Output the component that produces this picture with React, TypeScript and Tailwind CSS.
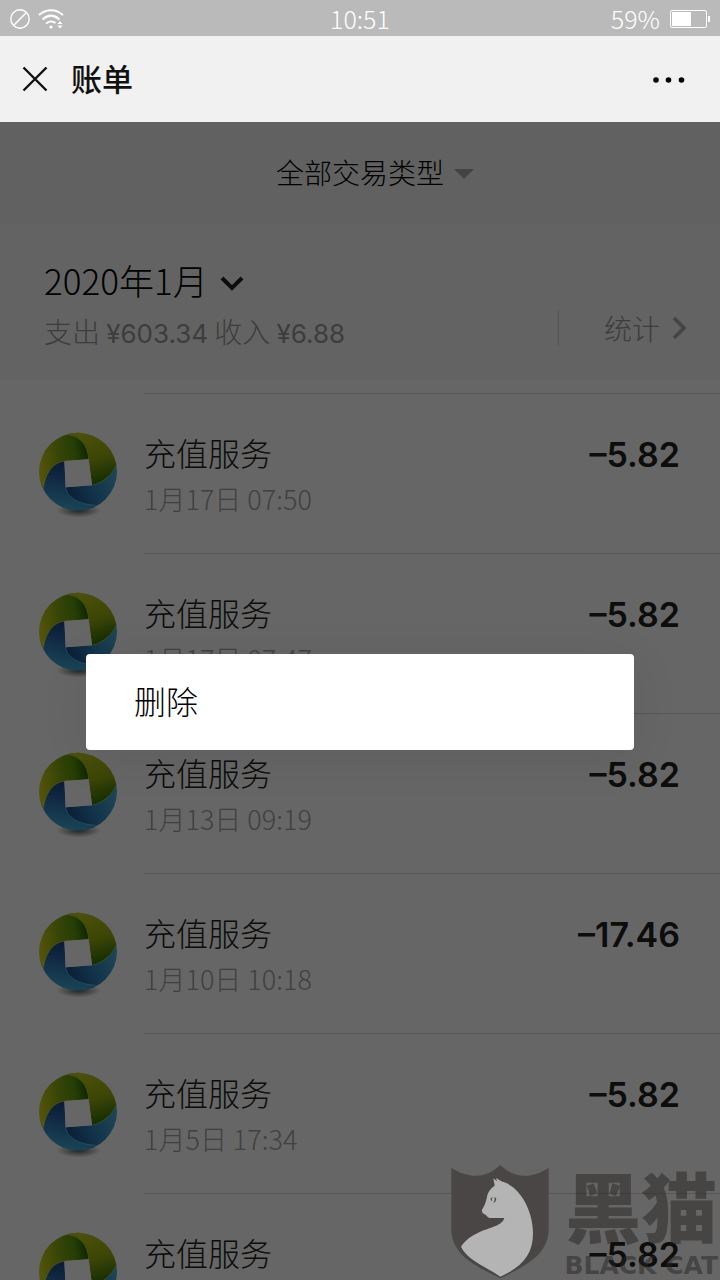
interface Bill {
  id: number
  title: string
  time?: string
  amount: string
}

const bills: Bill[] = [
  { id: 1, title: '充值服务', time: '1月17日 07:50', amount: '–5.82' },
  { id: 2, title: '充值服务', time: '1月17日 07:47', amount: '–5.82' },
  { id: 3, title: '充值服务', time: '1月13日 09:19', amount: '–5.82' },
  { id: 4, title: '充值服务', time: '1月10日 10:18', amount: '–17.46' },
  { id: 5, title: '充值服务', time: '1月5日 17:34', amount: '–5.82' },
  { id: 6, title: '充值服务', amount: '–5.82' },
]

function StatusBar() {
  return (
    <div className="grid h-9 shrink-0 grid-cols-3 items-center bg-[#bababa] px-2.5 text-[25px] font-light text-white">
      <div className="flex items-center gap-2">
        <svg viewBox="0 0 20 20" className="size-5" fill="none" stroke="currentColor" strokeWidth="1.4">
          <circle cx="10" cy="10" r="9.2" />
          <path d="M4 16 16 4" />
        </svg>
        <svg viewBox="0 0 26 20" className="h-5 w-[26px]" fill="none" stroke="currentColor" strokeWidth="2">
          <path d="M1 6C8-.5 18-.5 25 6M4.500 10.500C10 5.500 16 5.500 21.500 10.500M8 14.500c3-2.700 7-2.700 9.500-.5" />
          <circle cx="13" cy="18" r="1.600" fill="currentColor" stroke="none" />
          <path d="m19.500 15 2.500-3 2.500 3zM19.500 16.500l2.500 3 2.500-3z" fill="currentColor" stroke="none" />
        </svg>
      </div>
      <span className="text-center">10:51</span>
      <div className="flex items-center justify-end gap-2.5">
        <span>59%</span>
        <svg viewBox="0 0 40 18" className="h-[18px] w-10" fill="none" stroke="currentColor">
          <rect x="0.500" y="0.500" width="36" height="17" rx="1.500" />
          <path d="M2 2h19v14H2z" fill="currentColor" stroke="none" />
          <path d="M38 6h2v6h-2z" fill="currentColor" stroke="none" />
        </svg>
      </div>
    </div>
  )
}

function TitleBar() {
  return (
    <header className="flex h-[86px] shrink-0 items-center bg-[#f1f1f1] pr-8 pl-[22px] text-[#111]">
      <button type="button" aria-label="关闭">
        <svg viewBox="0 0 26 26" className="size-[26px]" fill="none" stroke="currentColor" strokeWidth="2.400">
          <path d="m1.500 1.500 23 23M24.500 1.500l-23 23" />
        </svg>
      </button>
      <h1 className="ml-[23px] pb-0.5 text-[31px] font-medium">账单</h1>
      <button type="button" aria-label="更多" className="ml-auto pt-0.5">
        <svg viewBox="0 0 36 8" className="h-2 w-9" fill="#000">
          <circle cx="4" cy="4" r="2.800" />
          <circle cx="16.500" cy="4" r="2.800" />
          <circle cx="29.500" cy="4" r="2.800" />
        </svg>
      </button>
    </header>
  )
}

// Gradients and clip shared by every bill icon
function LogoGradients() {
  return (
    <svg className="absolute size-0" aria-hidden="true">
      <defs>
        <clipPath id="logoRound">
          <circle cx="144" cy="137" r="117" />
        </clipPath>
        <linearGradient id="leafTop" x1="0" y1="0.6" x2="1" y2="0.4">
          <stop offset="0" stopColor="#d6d820" />
          <stop offset="0.45" stopColor="#8cac10" />
          <stop offset="0.75" stopColor="#5f9a0c" />
          <stop offset="1" stopColor="#2a5c0c" />
        </linearGradient>
        <linearGradient id="leafRight" x1="0.3" y1="0" x2="0.6" y2="1">
          <stop offset="0" stopColor="#c4cc20" />
          <stop offset="0.55" stopColor="#98ae10" />
          <stop offset="1" stopColor="#2f6c0c" />
        </linearGradient>
        <linearGradient id="waveBottom" x1="0" y1="0.7" x2="1" y2="0.2">
          <stop offset="0" stopColor="#1a4684" />
          <stop offset="0.4" stopColor="#2c7cb4" />
          <stop offset="1" stopColor="#56b4dc" />
        </linearGradient>
        <linearGradient id="waveLeft" x1="0.5" y1="0" x2="0.3" y2="1">
          <stop offset="0" stopColor="#1c3c7c" />
          <stop offset="0.4" stopColor="#2c6cac" />
          <stop offset="1" stopColor="#44bce0" />
        </linearGradient>
        <radialGradient id="logoShade">
          <stop offset="0" stopColor="#333" stopOpacity="0.8" />
          <stop offset="1" stopColor="#333" stopOpacity="0" />
        </radialGradient>
      </defs>
    </svg>
  )
}

function BillLogo() {
  return (
    <svg viewBox="24 15 240 264" className="h-[88px] w-20 shrink-0" aria-hidden="true">
      <ellipse cx="146" cy="254" rx="66" ry="20" fill="url(#logoShade)" />
      <g clipPath="url(#logoRound)">
        <path d="M270 90V260H140C125 230 110 210 107 184L186 178C225 168 250 145 270 90Z" fill="url(#waveBottom)" />
        <path d="M103 105C60 115 34 150 20 190V260H160L200 236C150 235 112 215 107 184Z" fill="url(#waveLeft)" />
        <path d="M20 210V10H150C170 40 178 65 176 100L103 105C65 112 44 145 38 210Z" fill="url(#leafTop)" />
        <path d="M112 25 140 10H270V90C255 140 225 168 186 178L176 100C172 55 150 32 112 25Z" fill="url(#leafRight)" />
        <path
          d="M38 205C42 145 65 113 103 105M112 25C150 32 172 55 176 100M264 100C252 145 225 168 186 178"
          fill="none"
          stroke="#c4dc4c"
          strokeOpacity="0.5"
          strokeWidth="2.500"
        />
        <path d="M195 238C145 235 112 215 107 184" fill="none" stroke="#6cd0ec" strokeOpacity="0.6" strokeWidth="3" />
      </g>
      <path d="m103 105 73-5 10 78-79 6z" fill="#fff" />
    </svg>
  )
}

function BillRow({ bill }: { bill: Bill }) {
  return (
    <li className="flex h-40 shrink-0 items-start pl-[38px]">
      <div className="pt-[38px]">
        <BillLogo />
      </div>
      <div className="ml-[26px] flex h-full flex-1 items-start justify-between border-t border-[#dadada] pt-[35px] pr-10">
        <div>
          <p className="text-[32px] leading-[46px] font-light text-[#222]">{bill.title}</p>
          {bill.time && <p className="text-[27px] leading-[48px] font-light text-[#a2a2a2]">{bill.time}</p>}
        </div>
        <p className="font-['Inter','Noto_Sans_CJK_SC',sans-serif] text-[34px] leading-[52px] font-semibold text-[#222]">
          {bill.amount}
        </p>
      </div>
    </li>
  )
}

function Summary() {
  return (
    <section className="flex h-[156px] shrink-0 flex-col bg-[#f7f7f7] pt-8 pr-8 pl-11">
      <button type="button" className="flex items-center gap-3 self-start text-[35px] leading-[48px] font-light text-black">
        2020年1月
        <svg viewBox="0 0 24 16" className="mt-2 h-4 w-6" fill="none" stroke="#222" strokeWidth="4">
          <path d="m2 2 10 10L22 2" />
        </svg>
      </button>
      <div className="flex items-start justify-between text-[28px] leading-[48px] font-light text-[#999]">
        <p className="pt-[3px]">
          支出 <span className="font-['Inter','Noto_Sans_CJK_SC',sans-serif] text-[26px] font-normal">¥603.34</span> 收入{' '}
          <span className="font-['Inter','Noto_Sans_CJK_SC',sans-serif] text-[26px] font-normal">¥6.88</span>
        </p>
        <a href="#stats" className="flex items-center">
          <span className="mr-[45px] h-9 w-px bg-[#d0d0d0]" />
          统计
          <svg viewBox="0 0 16 24" className="ml-3 h-6 w-4" fill="none" stroke="#aaa" strokeWidth="3.500">
            <path d="m2 2 10 10L2 22" />
          </svg>
        </a>
      </div>
    </section>
  )
}

function Watermark() {
  return (
    <div className="pointer-events-none absolute right-0 bottom-0 flex items-start gap-[15px] pr-0.5 text-[#282222]/50">
      <svg viewBox="33 45 292 345" className="h-[115px] w-[98px]" aria-hidden="true">
        <path d="M33 54C85 85 135 88 180 45 225 88 275 85 325 54V235C325 315 260 345 180 385 100 345 33 315 33 235Z" fill="#4a4646" />
        <path
          d="M159 85 170 94 167 84 183 94C238 108 278 180 278 250 278 315 245 350 180 380 140 352 80 330 62 290 90 248 140 240 172 225 184 219 190 212 192 204H148C136 200 140 194 132 193 126 190 124 184 125 179 132 168 137 158 141 135 146 120 155 112 163 107Z"
          fill="#b4b4b4"
        />
        <path d="m151 145 7-4-4 6 2 7-5-4zM163 140l5 6-3 9-6 4 4-9z" fill="#4a4646" />
      </svg>
      <div className="flex flex-col items-center gap-3 pt-px">
        <span className="text-[76px] leading-[76px] font-black">黑猫</span>
        <span className="font-['DejaVu_Sans',sans-serif] text-[25px] leading-6 font-bold">BLACK CAT</span>
      </div>
    </div>
  )
}

function App() {
  return (
    <div className="relative flex h-screen flex-col overflow-hidden font-['Noto_Sans_CJK_SC',sans-serif]">
      <StatusBar />
      <TitleBar />
      <main className="relative flex min-h-0 flex-1 flex-col overflow-hidden bg-white">
        <LogoGradients />
        <div className="flex h-[102px] shrink-0 justify-center bg-[#f2f2f2] pt-[30px] pl-[30px]">
          <button type="button" className="flex items-center gap-2.5 self-start text-[28px] leading-[40px] font-light text-black">
            全部交易类型
            <svg viewBox="0 0 20 10" className="mt-1 h-2.5 w-5" fill="#aaa">
              <path d="M0 0h20L10 10z" />
            </svg>
          </button>
        </div>
        <Summary />
        <ul className="flex flex-col pt-[13px]">
          {bills.map((bill) => (
            <BillRow key={bill.id} bill={bill} />
          ))}
        </ul>
        <div className="absolute inset-0 flex items-center bg-black/60 px-[86px] pt-0.5">
          <div role="menu" className="flex-1 rounded bg-white shadow-[0_8px_48px_rgba(0,0,0,0.08)]">
            <button type="button" role="menuitem" className="h-24 w-full px-12 pb-1 text-left text-[32px] font-light text-black">
              删除
            </button>
          </div>
        </div>
      </main>
      <Watermark />
    </div>
  )
}

export default App
